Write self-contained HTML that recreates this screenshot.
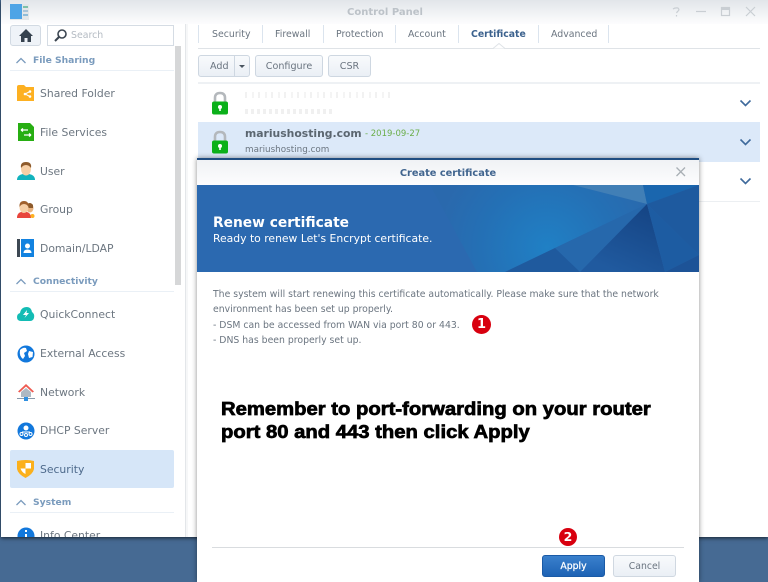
<!DOCTYPE html>
<html><head><meta charset="utf-8"><style>
*{box-sizing:border-box}
html,body{margin:0;padding:0;width:768px;height:582px;overflow:hidden;background:#466a93}
body{font-family:"DejaVu Sans","Liberation Sans",sans-serif;color:#6b7580}
#w{position:absolute;left:0;top:0;width:768px;height:582px;overflow:hidden;background:#466a93;filter:blur(.3px)}
.a{position:absolute;white-space:nowrap}
.nav{font-size:10.8px;color:#6c7680;line-height:14px}
.sec{font-size:9.2px;font-weight:bold;color:#7a9bbd;line-height:12px}
.tab{font-size:9.4px;color:#6b7580;line-height:12px;top:29px}
.sep{position:absolute;top:25px;width:1px;height:18px;background:#dbe4ee}
.btn{position:absolute;top:55px;height:22px;border:1px solid #ced7e1;border-radius:3px;background:linear-gradient(#f8fafc,#eaeff5);font-size:9.6px;color:#6b7580;text-align:center;line-height:21px}
.body{font-size:9.3px;color:#6b7580;line-height:15.4px}
</style></head><body><div id="w">
<!-- window -->
<div class="a" style="left:1px;top:0;width:767px;height:537px;background:#fff;box-shadow:0 1px 4px rgba(0,0,0,.7)"></div>
<div class="a" style="left:1px;top:0;width:767px;height:24px;background:linear-gradient(#e2e6ea,#fdfdfe)"></div>
<!-- logo -->
<svg class="a" style="left:10px;top:4px" width="19" height="16"><rect width="19" height="16" fill="#e2e6e8"/><rect width="12" height="15" fill="#4ea4e6"/><rect x="13" y="2" width="5" height="2" fill="#7fc0a8"/><rect x="13" y="6" width="5" height="2" fill="#a8c4d8"/><rect x="13" y="10" width="5" height="2" fill="#8fbcd8"/></svg>
<div class="a" style="left:347px;top:6px;font-size:10px;font-weight:bold;color:#bcc2c8;line-height:13px">Control Panel</div>
<svg class="a" style="left:668px;top:0" width="100" height="24" fill="none" stroke="#c9ced3" stroke-width="1.200"><path d="M5 9 Q7 7.500 10 8 Q12 10 9.500 11.500 L8.500 13 M8.500 15 V16.500"/><path d="M28 11.500 H38"/><rect x="53.500" y="7.500" width="8" height="8"/><path d="M53 9 H62" stroke-width="2"/><path d="M78 7 L87 16 M87 7 L78 16"/></svg>
<!-- sidebar -->
<div class="a" style="left:185px;top:24px;width:1px;height:513px;background:#e3e6e9"></div>
<div class="a" style="left:186px;top:24px;width:2px;height:513px;background:#f6f7f8"></div>
<div class="a" style="left:10px;top:25px;width:31px;height:21px;border:1px solid #d2dae3;border-radius:3px;background:#eff3f8"></div>
<svg class="a" style="left:18px;top:28px" width="16" height="15"><path d="M8 1 L1 8 H3 V14 H6.500 V10 H9.500 V14 H13 V8 H15 Z" fill="#36424f"/></svg>
<div class="a" style="left:47px;top:25px;width:127px;height:21px;border:1px solid #d5dce4;background:#fff"></div>
<svg class="a" style="left:53px;top:28px" width="15" height="15" fill="none" stroke="#3b4550" stroke-width="1.600"><circle cx="9" cy="6" r="4"/><path d="M6 9 L2 13" stroke-width="2"/></svg>
<div class="a" style="left:71px;top:30px;font-size:9.400px;color:#b4bbc3;line-height:12px">Search</div>
<div class="a" style="left:175px;top:46px;width:6px;height:239px;background:#d6d7d8"></div>

<svg class="a" style="left:15px;top:57px" width="12" height="8" fill="none" stroke="#7a9bbd" stroke-width="1.300"><path d="M1.500 6 L6 1.500 L10.500 6"/></svg>
<div class="a sec" style="left:33px;top:55px">File Sharing</div>
<div class="a" style="left:10px;top:70px;width:164px;height:1px;background:#eaf0f6"></div>

<svg class="a" style="left:17px;top:85px" width="18" height="17"><path d="M0 2 Q0 0 2 0 H7 L9 2 H17 V16 H0Z" fill="#fdb021"/><circle cx="13" cy="6.500" r="1.300" fill="#fff"/><circle cx="13" cy="11.500" r="1.300" fill="#fff"/><circle cx="8" cy="9" r="1.300" fill="#fff"/><path d="M13 6.500 L8 9 L13 11.500" stroke="#fff" fill="none"/></svg>
<div class="a nav" style="left:40px;top:87px">Shared Folder</div>

<svg class="a" style="left:17px;top:123px" width="17" height="18"><path d="M1 0 H13 L17 4 V18 H1Z" fill="#27ae12"/><path d="M4 7 H11 M4 7 L6 5.500 M4 7 L6 8.500 M7 12 H14 M14 12 L12 10.500 M14 12 L12 13.500" stroke="#fff" stroke-width="1.300" fill="none"/></svg>
<div class="a nav" style="left:40px;top:126px">File Services</div>

<svg class="a" style="left:17px;top:162px" width="18" height="18"><path d="M0 18 Q0 13 6 12 H12 Q18 13 18 18Z" fill="#12b3bd"/><ellipse cx="9" cy="7" rx="5" ry="6.500" fill="#f6cfa6"/><path d="M4 6 Q3 0 9 0 Q15 0 14 6 Q12 3 9 3 Q6 3 4 6Z" fill="#8d5a2b"/></svg>
<div class="a nav" style="left:40px;top:165px">User</div>

<svg class="a" style="left:17px;top:201px" width="18" height="18"><ellipse cx="13" cy="7" rx="3.500" ry="4.500" fill="#e8b27f"/><path d="M9 4 Q13 0 16 4 L16 7 L10 7Z" fill="#8d5a2b"/><path d="M0 17 Q0 12 4 11 H10 Q14 12 14 17Z" fill="#e8453c"/><ellipse cx="7" cy="6.500" rx="4.500" ry="5.500" fill="#f6cfa6"/><path d="M2.500 6 Q2 0 7 0 Q12 0 11.500 6 Q10 3 7 3 Q4 3 2.500 6Z" fill="#a0612d"/><circle cx="15.500" cy="15" r="2" fill="#fdb021"/></svg>
<div class="a nav" style="left:40px;top:203px">Group</div>

<svg class="a" style="left:17px;top:239px" width="17" height="18"><rect width="3" height="18" fill="#3d4853"/><rect x="4" width="13" height="18" fill="#1282e0"/><circle cx="10.500" cy="7" r="2.500" fill="#fff"/><path d="M6.500 14 Q6.500 10.500 10.500 10.500 Q14.500 10.500 14.500 14Z" fill="#fff"/></svg>
<div class="a nav" style="left:40px;top:242px">Domain/LDAP</div>

<svg class="a" style="left:15px;top:278px" width="12" height="8" fill="none" stroke="#7a9bbd" stroke-width="1.300"><path d="M1.500 6 L6 1.500 L10.500 6"/></svg>
<div class="a sec" style="left:33px;top:276px">Connectivity</div>
<div class="a" style="left:10px;top:291px;width:164px;height:1px;background:#eaf0f6"></div>

<svg class="a" style="left:17px;top:306px" width="18" height="16"><path d="M4 15 Q0 15 0 11 Q0 8 3 7 Q4 1 10 1 Q14 1 15 6 Q18 8 17 12 Q16 15 13 15Z" fill="#13bcb4"/><path d="M10 4 L6 9 H9 L7.500 12 L12 7 H9.500Z" fill="#fff"/></svg>
<div class="a nav" style="left:40px;top:308px">QuickConnect</div>

<svg class="a" style="left:17px;top:345px" width="18" height="18"><circle cx="9" cy="9" r="8.500" fill="#1278dc"/><path d="M3 5 Q6 2 9 3 L10 6 L7 8 L8 11 L6 14 Q2 11 3 5Z" fill="#fff"/><path d="M12 6 L16 7 L15.500 12 L12 13 L11 9Z" fill="#fff"/></svg>
<div class="a nav" style="left:40px;top:347px">External Access</div>

<svg class="a" style="left:17px;top:383px" width="18" height="19"><path d="M9 1 L1 8.500 L2.500 9.500 L9 3.500 L15.500 9.500 L17 8.500Z" fill="#ef5a50"/><path d="M4 9 L9 5 L14 9 V14 H4Z" fill="#aeb8c2"/><rect x="0" y="15" width="18" height="1" fill="#89a"/><rect x="7" y="14" width="4" height="4" fill="#2f8fe0"/></svg>
<div class="a nav" style="left:40px;top:386px">Network</div>

<svg class="a" style="left:17px;top:422px" width="18" height="18"><circle cx="9" cy="9" r="8.500" fill="#1278dc"/><circle cx="9" cy="6" r="2.500" fill="#fff"/><path d="M5 10 H13" stroke="#fff"/><g fill="none" stroke="#fff"><circle cx="4.500" cy="12" r="1.500"/><circle cx="9" cy="13" r="1.500"/><circle cx="13.500" cy="12" r="1.500"/></g></svg>
<div class="a nav" style="left:40px;top:424px">DHCP Server</div>

<div class="a" style="left:10px;top:450px;width:164px;height:38px;background:#d6e6f8;border-radius:2px"></div>
<svg class="a" style="left:17px;top:460px" width="18" height="18"><path d="M0 1 Q9 -1 17 1 V9 Q16 14 8.500 18 Q1 14 0 9Z" fill="#fbb01c"/><path d="M8.500 3 H14 V8.500 H8.500Z M3.500 8.500 H8.500 V14 Q5 12.500 3.500 8.500Z" fill="#fff"/></svg>
<div class="a nav" style="left:40px;top:463px;color:#4e6a8c">Security</div>

<svg class="a" style="left:15px;top:499px" width="12" height="8" fill="none" stroke="#7a9bbd" stroke-width="1.300"><path d="M1.500 6 L6 1.500 L10.500 6"/></svg>
<div class="a sec" style="left:33px;top:497px">System</div>
<div class="a" style="left:10px;top:512px;width:164px;height:1px;background:#eaf0f6"></div>
<div style="position:absolute;left:0;top:520px;width:185px;height:17px;overflow:hidden">
<svg class="a" style="left:17px;top:7px" width="18" height="18"><circle cx="9" cy="9" r="8.500" fill="#1278dc"/><rect x="8" y="3" width="2" height="2" fill="#fff"/><rect x="8" y="7" width="2" height="8" fill="#fff"/></svg>
<div class="a nav" style="left:40px;top:9px">Info Center</div></div>

<!-- tabs -->
<div class="a" style="left:198px;top:48px;width:562px;height:1px;background:#dfe3e7"></div>
<div class="sep" style="left:198px"></div>
<div class="a tab" style="left:212px">Security</div>
<div class="sep" style="left:262px"></div>
<div class="a tab" style="left:275px">Firewall</div>
<div class="sep" style="left:323px"></div>
<div class="a tab" style="left:336px">Protection</div>
<div class="sep" style="left:395px"></div>
<div class="a tab" style="left:408px">Account</div>
<div class="sep" style="left:458px"></div>
<div class="a tab" style="left:471px;font-weight:bold;color:#3c628e;font-size:9.300px">Certificate</div>
<div class="sep" style="left:538px"></div>
<div class="a tab" style="left:551px">Advanced</div>
<div class="sep" style="left:608px"></div>
<svg class="a" style="left:491px;top:43px" width="16" height="6"><path d="M2 5.500 L8 .5 L14 5.500" fill="#fff" stroke="#dfe3e7"/></svg>

<!-- toolbar -->
<div class="btn" style="left:198px;width:52px;text-align:left;padding-left:11px">Add</div>
<div class="a" style="left:234px;top:55px;width:1px;height:22px;background:#ced7e1"></div>
<svg class="a" style="left:238px;top:64px" width="8" height="5"><path d="M1 1 H7 L4 4Z" fill="#4a5560"/></svg>
<div class="btn" style="left:255px;width:68px">Configure</div>
<div class="btn" style="left:328px;width:43px">CSR</div>
<div class="a" style="left:198px;top:82px;width:562px;height:2px;background:#eef1f4"></div>

<!-- cert list -->
<svg class="a" style="left:211px;top:91px" width="18" height="24"><path d="M4 11 V7 Q4 2 9 2 Q14 2 14 7 V11" fill="none" stroke="#b4b8bc" stroke-width="2.600"/><rect x="1" y="10.500" width="16" height="13" rx="2" fill="#0bb01a"/><circle cx="9" cy="16" r="2" fill="#fff"/><rect x="8.200" y="16" width="1.600" height="4" fill="#fff"/></svg>
<div class="a" style="left:245px;top:92px;width:145px;height:6px;background:repeating-linear-gradient(90deg,#eee 0 2px,#fff 2px 7px,#f2f2f2 7px 9px,#fff 9px 13px);opacity:.8"></div>
<div class="a" style="left:245px;top:109px;width:90px;height:5px;background:repeating-linear-gradient(90deg,#eaeaea 0 3px,#fff 3px 6px);opacity:.7"></div>
<svg class="a" style="left:739px;top:99px" width="13" height="9" fill="none" stroke="#3f6a9c" stroke-width="1.600"><path d="M1.500 1.500 L6.500 6.500 L11.500 1.500"/></svg>
<div class="a" style="left:198px;top:122px;width:562px;height:40px;background:#dce9f9"></div>
<svg class="a" style="left:211px;top:130px" width="18" height="24"><path d="M4 11 V7 Q4 2 9 2 Q14 2 14 7 V11" fill="none" stroke="#b4b8bc" stroke-width="2.600"/><rect x="1" y="10.500" width="16" height="13" rx="2" fill="#0bb01a"/><circle cx="9" cy="16" r="2" fill="#fff"/><rect x="8.200" y="16" width="1.600" height="4" fill="#fff"/></svg>
<div class="a" style="left:245px;top:127px;font-size:10.800px;font-weight:bold;color:#5b6670;line-height:14px">mariushosting.com</div>
<div class="a" style="left:365px;top:128px;font-size:8.500px;color:#6bae4b;line-height:13px">- 2019-09-27</div>
<div class="a" style="left:245px;top:144px;font-size:8.800px;color:#6b7580;line-height:12px">mariushosting.com</div>
<svg class="a" style="left:739px;top:138px" width="13" height="9" fill="none" stroke="#3f6a9c" stroke-width="1.600"><path d="M1.500 1.500 L6.500 6.500 L11.500 1.500"/></svg>
<svg class="a" style="left:739px;top:177px" width="13" height="9" fill="none" stroke="#3f6a9c" stroke-width="1.600"><path d="M1.500 1.500 L6.500 6.500 L11.500 1.500"/></svg>
<div class="a" style="left:198px;top:201px;width:562px;height:1px;background:#eceff2"></div>

<!-- dialog -->
<div class="a" style="left:197px;top:158px;width:502px;height:424px;background:#fff;border-top:2px solid #1f4d82;box-shadow:0 0 5px rgba(0,0,0,.45)"></div>
<div class="a" style="left:197px;top:160px;width:502px;height:25px;background:linear-gradient(#f0f2f5,#fdfdfe)"></div>
<div class="a" style="left:197px;top:167px;width:502px;text-align:center;font-size:9.800px;font-weight:bold;color:#41658f;line-height:13px">Create certificate</div>
<svg class="a" style="left:675px;top:166px" width="12" height="12" fill="none" stroke="#a9afb5" stroke-width="1.300"><path d="M1.500 1.500 L10 10 M10 1.500 L1.500 10"/></svg>
<svg class="a" style="left:197px;top:185px" width="502" height="87" viewBox="0 0 502 87">
<defs>
<radialGradient id="g2" gradientUnits="userSpaceOnUse" cx="350" cy="62" r="110"><stop offset="0" stop-color="#2080c5"/><stop offset=".6" stop-color="#2470b5"/><stop offset="1" stop-color="#2a69ad"/></radialGradient>
<linearGradient id="g3" gradientUnits="userSpaceOnUse" x1="450" y1="19" x2="420" y2="87"><stop offset="0" stop-color="#154484"/><stop offset="1" stop-color="#205a9f"/></linearGradient>
</defs>
<rect width="502" height="87" fill="#2b69b0"/>
<path d="M233 0 L376 0 L450 19 L358 63 L308 87 L280 87Z" fill="url(#g2)"/>
<path d="M358 63 L450 19 L383 87Z" fill="#2668ac"/>
<path d="M308 87 L358 63 L383 87Z" fill="#1f5a9e"/>
<path d="M450 19 L383 87 L468 87Z" fill="url(#g3)"/>
<path d="M450 19 L468 87 L502 70Z" fill="#1d5ca2"/>
<path d="M468 87 L502 70 V87Z" fill="#1d5397"/>
<path d="M376 0 L446 0 L450 19Z" fill="#417fb6"/>
<path d="M446 0 L450 19 L502 0Z" fill="#1a66ae"/>
<path d="M450 19 L502 0 V70Z" fill="#1e5a9f"/>
</svg>
<div class="a" style="left:213px;top:215px;font-size:13.800px;font-weight:bold;color:#fff;line-height:17px">Renew certificate</div>
<div class="a" style="left:213px;top:232px;font-size:10.800px;color:#fff;line-height:13px">Ready to renew Let's Encrypt certificate.</div>
<div class="a body" style="left:213px;top:287px">The system will start renewing this certificate automatically. Please make sure that the network<br>environment has been set up properly.<br>- DSM can be accessed from WAN via port 80 or 443.<br>- DNS has been properly set up.</div>
<div class="a" style="left:472px;top:315px;width:19px;height:19px;border-radius:50%;background:#d8000f;color:#fff;font-size:13px;font-weight:bold;text-align:center;line-height:19px">1</div>
<div class="a" style="left:221px;top:398px;font-family:'Liberation Sans',sans-serif;font-size:18px;font-weight:bold;color:#000;line-height:23px;-webkit-text-stroke:.7px #000;transform:scaleX(1.125);transform-origin:0 0">Remember to port-forwarding on your router<br>port 80 and 443 then click Apply</div>
<div class="a" style="left:212px;top:547px;width:472px;height:1px;background:#d9dcdf"></div>
<div class="a" style="left:559px;top:528px;width:18px;height:18px;border-radius:50%;background:#d8000f;color:#fff;font-size:12.500px;font-weight:bold;text-align:center;line-height:18px">2</div>
<div class="a" style="left:542px;top:555px;width:63px;height:22px;border-radius:3px;border:1px solid #1a5aa6;background:linear-gradient(#3a80cc,#1d62b4);color:#fff;font-size:9.300px;text-align:center;line-height:21px;-webkit-text-stroke:.25px #fff">Apply</div>
<div class="a" style="left:613px;top:555px;width:63px;height:22px;border-radius:3px;border:1px solid #d0d8e1;background:linear-gradient(#f8fafc,#eaeff5);color:#6b7580;font-size:9.300px;text-align:center;line-height:21px">Cancel</div>
</div></body></html>
